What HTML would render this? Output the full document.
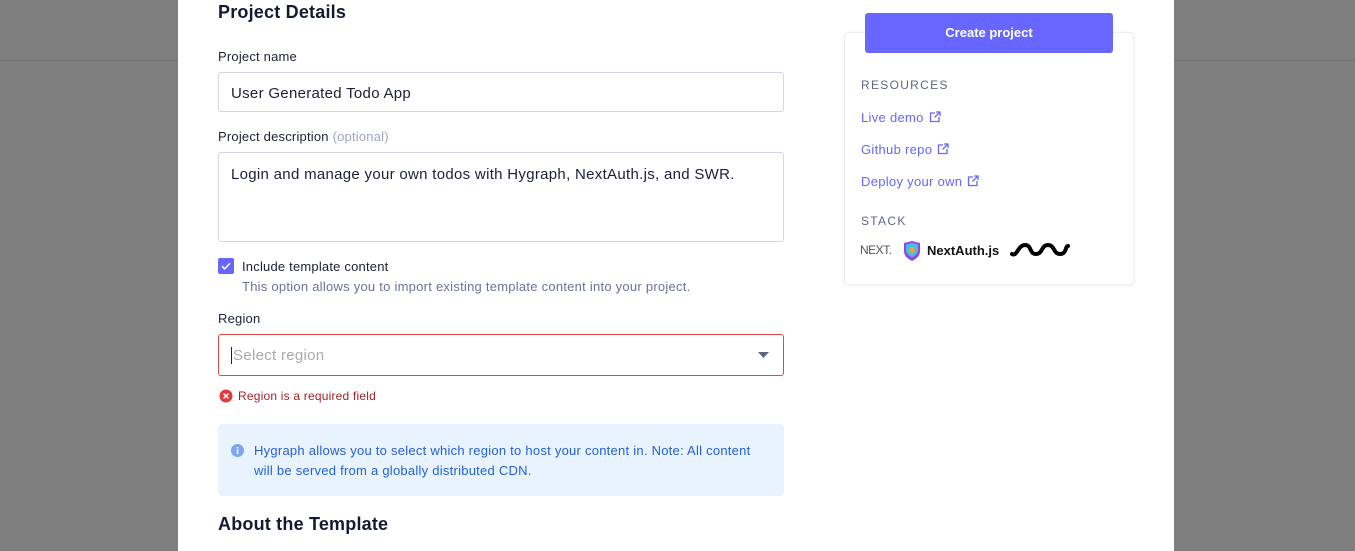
<!DOCTYPE html>
<html><head><meta charset="utf-8"><style>
*{box-sizing:border-box;margin:0;padding:0}
body{width:1355px;height:551px;overflow:hidden;background:#7f7f7f;font-family:"Liberation Sans",sans-serif;position:relative}
.line{position:absolute;left:0;right:0;top:60px;height:1px;background:#747474}
.modal{position:absolute;left:178px;top:0;width:996px;height:551px;background:#fff}
.abs{position:absolute}
h2{position:absolute;left:218px;font-size:18px;font-weight:bold;color:#131a33;letter-spacing:0.2px}
.lbl{position:absolute;left:218px;font-size:13px;color:#1b2036;letter-spacing:0.2px}
.inp{position:absolute;left:218px;width:566px;border:1px solid #d3d6e6;border-radius:3px;font-size:15px;color:#1b2036;padding:0 12px;letter-spacing:0.3px}
.card{position:absolute;left:844px;top:32px;width:290px;height:253px;border:1px solid #eceef5;border-radius:4px;box-shadow:0 1px 4px rgba(0,0,0,.06);background:#fff}
.btn{position:absolute;left:865px;top:13px;width:248px;height:40px;background:#6766ff;border-radius:3px;color:#fff;font-size:13px;font-weight:bold;text-align:center;line-height:40px}
.hd{position:absolute;left:861px;font-size:12px;letter-spacing:1.3px;color:#5e6685}
.lk{position:absolute;left:861px;font-size:13px;color:#6766ff;letter-spacing:0.3px}
.lk svg{vertical-align:-1px;margin-left:5px}
</style></head><body>
<div class="line"></div>
<div class="modal"></div>
<h2 style="top:2px">Project Details</h2>
<div class="lbl" style="top:49px">Project name</div>
<div class="inp" style="top:72px;height:40px;line-height:41px">User Generated Todo App</div>
<div class="lbl" style="top:129px">Project description <span style="color:#9ea3cc">(optional)</span></div>
<div class="inp" style="top:152px;height:90px;padding-top:12px;line-height:20px">Login and manage your own todos with Hygraph, NextAuth.js, and SWR.</div>
<div class="abs" style="left:218px;top:258px;width:16px;height:16px;background:#6766ff;border-radius:2px"><svg width="16" height="16"><path d="M4 8.2l2.6 2.6L12 5.4" stroke="#fff" stroke-width="1.5" fill="none"/></svg></div>
<div class="lbl" style="left:242px;top:259px">Include template content</div>
<div class="abs" style="left:242px;top:279px;font-size:13px;color:#6b7394;letter-spacing:0.25px">This option allows you to import existing template content into your project.</div>
<div class="lbl" style="top:311px">Region</div>
<div class="inp" style="top:334px;height:42px;line-height:42px;border-color:#e04848;color:#aaa;padding-left:12px"><span style="border-left:1px solid #222;padding-left:1px">Select region</span>
<svg class="abs" style="right:14px;top:17px" width="11" height="7"><path d="M0 0h11L5.5 6z" fill="#5e6685"/></svg></div>
<svg class="abs" style="left:219px;top:389px" width="14" height="14"><circle cx="7" cy="7" r="6.5" fill="#e03a3a"/><path d="M4.6 4.6l4.8 4.8M9.4 4.6l-4.8 4.8" stroke="#fff" stroke-width="1.5"/></svg>
<div class="abs" style="left:238px;top:389px;font-size:12px;color:#a12424;letter-spacing:0.2px">Region is a required field</div>
<div class="abs" style="left:218px;top:424px;width:566px;height:72px;background:#e9f3fe;border-radius:4px"></div>
<svg class="abs" style="left:231px;top:444px" width="13" height="13"><circle cx="6.5" cy="6.5" r="6.5" fill="#7aa7f0"/><rect x="5.8" y="5.5" width="1.5" height="4.5" fill="#fff"/><rect x="5.8" y="3" width="1.5" height="1.5" fill="#fff"/></svg>
<div class="abs" style="left:254px;top:441px;width:505px;font-size:13px;line-height:20px;color:#2461d6;letter-spacing:0.25px">Hygraph allows you to select which region to host your content in. Note: All content will be served from a globally distributed CDN.</div>
<h2 style="top:514px">About the Template</h2>
<div class="card"></div>
<div class="btn">Create project</div>
<div class="hd" style="top:78px">RESOURCES</div>
<div class="lk" style="top:110px">Live demo<svg width="12" height="12"><path d="M6 2H1.5v8.5H10V6M7 1h4v4M11 1L5.5 6.5" stroke="#6766ff" stroke-width="1.3" fill="none"/></svg></div>
<div class="lk" style="top:142px">Github repo<svg width="12" height="12"><path d="M6 2H1.5v8.5H10V6M7 1h4v4M11 1L5.5 6.5" stroke="#6766ff" stroke-width="1.3" fill="none"/></svg></div>
<div class="lk" style="top:174px">Deploy your own<svg width="12" height="12"><path d="M6 2H1.5v8.5H10V6M7 1h4v4M11 1L5.5 6.5" stroke="#6766ff" stroke-width="1.3" fill="none"/></svg></div>
<div class="hd" style="top:214px">STACK</div>
<div class="abs" style="left:860px;top:243px;font-size:12px;color:#555;letter-spacing:-0.5px">NEXT.</div>
<svg class="abs" style="left:903px;top:241px" width="18" height="20"><path d="M1 2L9 0l8 2v8c0 5-4 8-8 10C5 18 1 15 1 10z" fill="#9b3ff0"/><path d="M3 3.5L9 2l6 1.5V9c0 3-3 6-6 7.5C6 15 3 12 3 9z" fill="#3cc4e0"/><circle cx="9" cy="9" r="3" fill="#f0a040"/></svg>
<div class="abs" style="left:927px;top:243px;font-size:13px;font-weight:bold;color:#111">NextAuth.js</div>
<svg class="abs" style="left:1010px;top:241px" width="60" height="18"><path d="M2 13c5 3 6-9 13-9s4 9 11 9 5-9 12-9 5 9 12 9 5-8 8-8" stroke="#000" stroke-width="4" fill="none" stroke-linecap="round"/></svg>
</body></html>
